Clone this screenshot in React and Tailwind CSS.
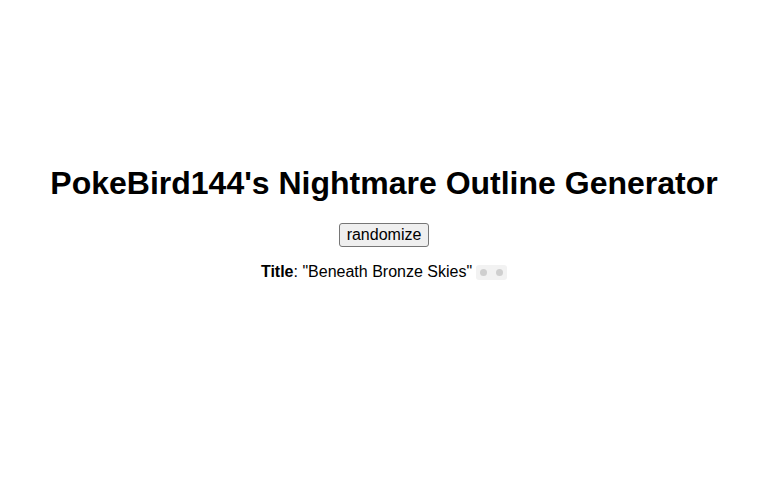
export default function App() {
  return (
    <div className="min-h-screen bg-white text-black flex flex-col items-center pt-[165px]" style={{ fontFamily: '"Liberation Sans", Arial, sans-serif' }}>
      <h1 className="text-[32px] leading-[37px] font-bold">PokeBird144's Nightmare Outline Generator</h1>
      <button className="mt-[21px] h-[24px] px-[7px] text-[16px] leading-[18px] bg-[#efefef] border border-[#767676] rounded-[3px] text-black">randomize</button>
      <div className="mt-[16px] text-[16px] leading-[18px] flex items-center">
        <span><b>Title</b>: "Beneath Bronze Skies"</span>
        <span className="ml-[4px] inline-flex items-center gap-[9px] bg-[#f2f2f2] rounded-[3px] h-[15px] px-[4px]">
          <span className="w-[7px] h-[7px] rounded-full bg-[#cfcfcf]"></span>
          <span className="w-[7px] h-[7px] rounded-full bg-[#cfcfcf]"></span>
        </span>
      </div>
    </div>
  );
}
